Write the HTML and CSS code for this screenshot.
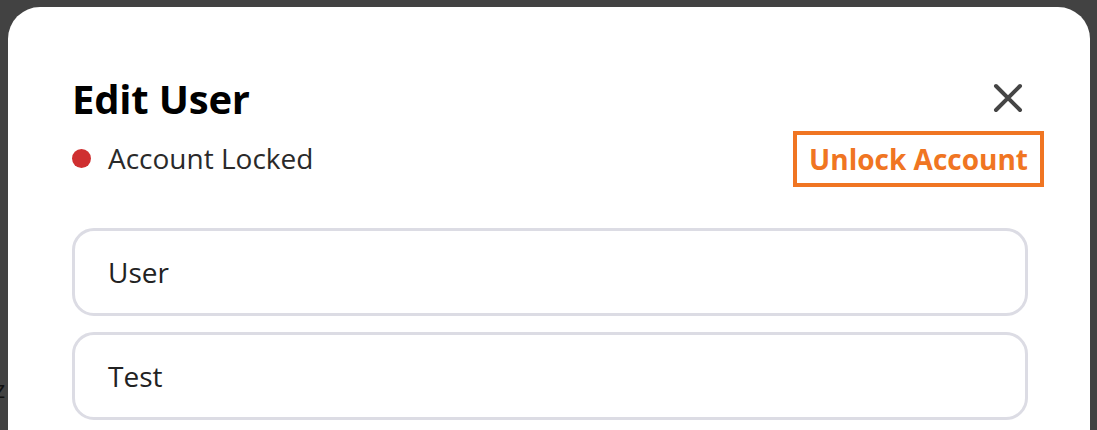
FILE: index.html
```html
<!DOCTYPE html>
<html lang="en">
<head>
<meta charset="utf-8">
<title>Edit User</title>
<link rel="stylesheet" href="styles.css">
</head>
<body>
<div class="backdrop">
  <span class="bg-char bg-left">z</span>
  <span class="bg-char bg-right">r</span>
  <div class="modal">
    <div class="modal-header">
      <h1 class="modal-title">Edit User</h1>
      <button class="close-btn" aria-label="Close">
        <svg width="32" height="32" viewBox="0 0 32 32" fill="none" stroke="#454545" stroke-width="4" stroke-linecap="round">
          <path d="M4 3L28 27M28 3L4 27"/>
        </svg>
      </button>
    </div>
    <div class="status-row">
      <div class="status">
        <span class="status-dot"></span>
        <span class="status-text">Account Locked</span>
      </div>
      <button class="unlock-btn">Unlock Account</button>
    </div>
    <div class="fields">
      <div class="field">User</div>
      <div class="field">Test</div>
    </div>
  </div>
</div>
</body>
</html>
```

FILE: styles.css
```css
html, body {
  margin: 0;
  padding: 0;
  height: 100%;
  overflow: hidden;
}
body {
  background: #424242;
  font-family: "Open Sans", "Noto Sans", sans-serif;
}
.backdrop {
  position: relative;
  height: 100%;
  padding: 7px 7px 0 8px;
  box-sizing: border-box;
}
.bg-char {
  position: absolute;
  top: 372px;
  font-size: 24px;
  color: #111;
}
.bg-left { left: -6px; }
.bg-right { right: -10px; }
.modal {
  position: relative;
  background: #ffffff;
  border-radius: 32px 32px 0 0;
  height: 600px;
  padding: 66px 62px 0 64px;
  box-sizing: border-box;
}
.modal-header {
  display: flex;
  justify-content: space-between;
  align-items: center;
}
.modal-title {
  margin: 0;
  font-size: 40px;
  line-height: 52px;
  font-weight: 700;
  color: #000;
  letter-spacing: -0.2px;
}
.close-btn {
  border: none;
  background: none;
  padding: 0;
  margin-right: 4px;
  width: 32px;
  height: 32px;
  display: flex;
}
.status-row {
  display: flex;
  justify-content: space-between;
  align-items: center;
  margin-top: 6px;
  margin-right: -16px;
}
.status {
  display: flex;
  align-items: center;
}
.status-dot {
  width: 19px;
  height: 19px;
  border-radius: 50%;
  background: #cf2f30;
  margin-right: 17px;
  margin-top: -1px;
}
.status-text {
  font-size: 28px;
  color: #2a2a2a;
  line-height: 40px;
  margin-top: -2px;
}
.unlock-btn {
  font-family: "Open Sans", "Noto Sans", sans-serif;
  font-size: 28px;
  font-weight: 700;
  color: #f07522;
  background: #fff;
  border: 4px solid #f07522;
  padding: 0 12px;
  height: 56px;
  line-height: 48px;
  white-space: nowrap;
}
.fields {
  display: flex;
  flex-direction: column;
  gap: 16px;
  margin-top: 41px;
}
.field {
  height: 88px;
  box-sizing: border-box;
  border: 3px solid #dcdce4;
  border-radius: 22px;
  padding: 0 33px;
  display: flex;
  align-items: center;
  font-size: 28px;
  color: #222;
}
```
